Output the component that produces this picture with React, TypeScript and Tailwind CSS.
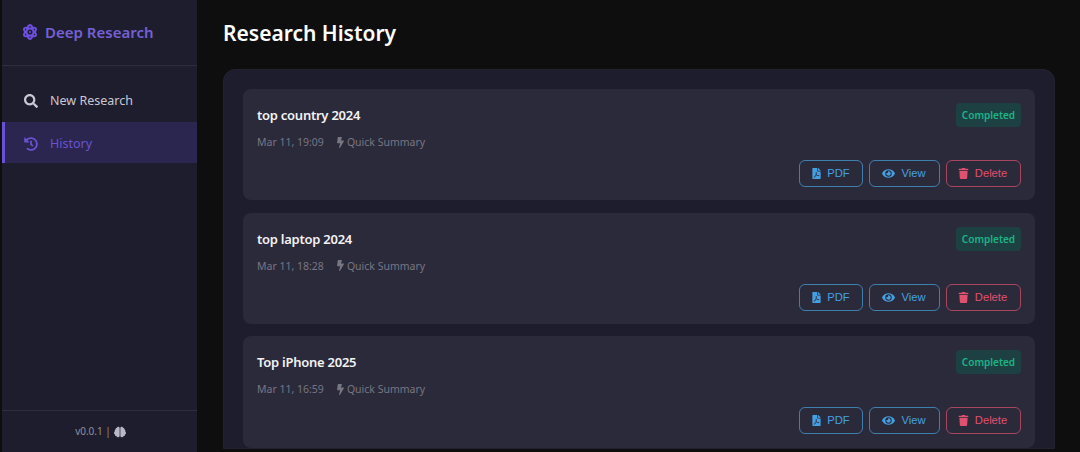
import { FaAtom, FaBolt, FaBrain, FaEye, FaFilePdf, FaHistory, FaSearch, FaTrash } from 'react-icons/fa';

const items = [
  { title: 'top country 2024', time: 'Mar 11, 19:09' },
  { title: 'top laptop 2024', time: 'Mar 11, 18:28' },
  { title: 'Top iPhone 2025', time: 'Mar 11, 16:59' },
];

function HistoryCard({ title, time }: { title: string; time: string }) {
  return (
    <div className="h-[111.2px] shrink-0 rounded-lg bg-[#2b2a3b] px-[14px] pt-[14px]">
      <div className="flex items-start justify-between">
        <h3 className="pt-[3px] text-[13px] leading-[18px] font-semibold tracking-[-0.25px] text-[#f2f2f4]">{title}</h3>
        <span className="flex h-[24px] w-[65px] items-center justify-center rounded-[4px] bg-[#1d4143] pt-[1px] text-[10px] font-semibold text-[#1cb486]">
          Completed
        </span>
      </div>
      <div className="mt-[7px] flex items-center text-[10.5px] leading-[16px] text-[#777683]">
        <span>{time}</span>
        <span className="ml-[11px] flex items-center gap-[1px]">
          <FaBolt className="text-[11px]" />
          Quick Summary
        </span>
      </div>
      <div className="mt-[10px] flex justify-end gap-[6px] font-['Liberation_Sans',sans-serif] text-[11.2px]">
        <button className="flex h-[27px] w-[64px] items-center justify-center gap-[5px] rounded-md border border-[#3f7fae] pr-[1px] text-[#45a0e2]">
          <FaFilePdf className="text-[11px]" />
          PDF
        </button>
        <button className="flex h-[27px] w-[71px] items-center justify-center gap-[6px] rounded-md border border-[#3f7fae] pr-[1px] text-[#45a0e2]">
          <FaEye className="text-[13px]" />
          View
        </button>
        <button className="flex h-[27px] w-[75px] items-center justify-center gap-[6px] rounded-md border border-[#a8465f] pr-[2px] text-[#e0506f]">
          <FaTrash className="text-[11px]" />
          Delete
        </button>
      </div>
    </div>
  );
}

export default function App() {
  return (
    <div className="flex h-[452px] w-[1080px] overflow-hidden bg-[#0e0e0e] font-['Noto_Sans',sans-serif]">
      <aside className="ml-[2px] flex w-[195px] shrink-0 flex-col bg-[#1e1d2e]">
        <div className="flex h-[66px] items-center gap-[7px] border-b border-[#2f2e40] pl-[20px] pb-[1px]">
          <FaAtom className="text-[16px] text-[#6d4fe0]" />
          <span className="text-[15px] font-semibold text-[#7460d6]">Deep Research</span>
        </div>
        <nav className="mt-[13px] flex flex-col text-[12.5px]">
          <div className="flex h-[43px] items-center gap-[12px] pl-[22px] pt-[1px] text-[#c9c8d2]">
            <FaSearch className="text-[14px]" />
            New Research
          </div>
          <div className="flex h-[41px] items-center gap-[12px] border-l-[3px] border-[#6a4fd8] bg-[#2b2650] pl-[19px] pt-[3px] text-[#6a52d0]">
            <FaHistory className="text-[14px]" />
            History
          </div>
        </nav>
        <div className="mt-auto flex h-[42px] items-center justify-center gap-[3px] border-t border-[#2f2e40] pl-[2px] text-[10px] text-[#8f8e9c]">
          v0.0.1 | <FaBrain className="text-[12px] text-[#b9b8c6]" />
        </div>
      </aside>
      <main className="flex min-w-0 flex-1 flex-col pl-[26px] pr-[25px]">
        <h1 className="mt-[17px] pt-[1px] text-[21px] leading-[30px] font-semibold text-white">Research History</h1>
        <div className="mt-[21px] flex flex-col gap-[12.5px] rounded-t-xl border border-[#23222f] bg-[#1e1d2e] px-[19px] pt-[19px]">
          {items.map((item) => (
            <HistoryCard key={item.title} title={item.title} time={item.time} />
          ))}
        </div>
      </main>
    </div>
  );
}
